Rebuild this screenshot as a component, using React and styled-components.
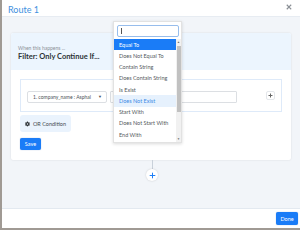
import React from 'react';
import styled, { createGlobalStyle } from 'styled-components';
import { FaCog } from 'react-icons/fa';

const GlobalStyle = createGlobalStyle`
	html, body {
		margin: 0;
		padding: 0;
		font-family: Lato, "Open Sans", sans-serif;
	}
`

const Page = styled.div`
	width: 300px;
	height: 230px;
	box-sizing: border-box;
	padding: 0 0 2px 2px;
	background: #a09a94;
	overflow: hidden;
`

const Modal = styled.div`
	position: relative;
	display: flex;
	flex-direction: column;
	height: 100%;
	background: #ffffff;
`

const Header = styled.div`
	display: flex;
	align-items: center;
	justify-content: space-between;
	height: 17px;
	padding: 0 8px 0 6px;
	border-bottom: 1px solid #e7ecf2;
	box-sizing: border-box;
`

const Title = styled.span`
	font-size: 9px;
	color: #4190e0;
	margin-top: 2px;
`

const Close = styled.span`
	display: flex;
	align-self: flex-start;
	margin-top: 4px;
`

const Body = styled.div`
	flex: 1;
	display: flex;
	flex-direction: column;
	align-items: stretch;
	background: #f2f5f9;
	padding: 16px 9px 0 9px;
`

const Card = styled.div`
	background: #ffffff;
	border-radius: 2px;
	box-shadow: 0 0 2px rgba(0, 0, 0, 0.12);
	overflow: hidden;
`

const CardHead = styled.div`
	display: flex;
	flex-direction: column;
	justify-content: center;
	height: 37px;
	padding: 2px 7px 0;
	box-sizing: border-box;
	background: #ecf5fe;
`

const Subtitle = styled.span`
	font-size: 5px;
	color: #8a8f96;
	line-height: 8px;
`

const HeadTitle = styled.span`
	font-size: 7.5px;
	font-weight: 700;
	color: #2e3338;
	line-height: 10px;
`

const CardBody = styled.div`
	display: flex;
	flex-direction: column;
	align-items: flex-start;
	padding: 9px 9px 10px 9px;
`

const ConditionBox = styled.div`
	display: flex;
	align-items: center;
	align-self: stretch;
	height: 33px;
	box-sizing: border-box;
	padding: 0 6px 0 6px;
	border: 1px solid #deeaf9;
`

const Select = styled.div`
	display: flex;
	align-items: center;
	gap: 3px;
	width: 80px;
	height: 12px;
	box-sizing: border-box;
	padding: 0 4px 0 5px;
	border: 1px solid #dcdfe3;
	border-radius: 2px;
	font-size: 5px;
	color: #4a4f55;
	white-space: nowrap;
	overflow: hidden;
	margin-top: 2px;
`

const Caret = styled.span`
	margin-left: auto;
	font-size: 4px;
`

const ValueInput = styled.div`
	width: 127px;
	height: 12px;
	margin-left: 3px;
	margin-top: 2px;
	box-sizing: border-box;
	border: 1px solid #dcdfe3;
	border-radius: 1px;
`

const AddRule = styled.div`
	display: flex;
	align-items: center;
	justify-content: center;
	width: 9px;
	height: 9px;
	margin-left: auto;
	box-sizing: border-box;
	border: 1px solid #e4e7eb;
	border-radius: 2px;
	background: #fff;
`

const OrButton = styled.div`
	display: flex;
	align-items: center;
	gap: 3px;
	width: 51px;
	height: 17px;
	margin-top: 3px;
	box-sizing: border-box;
	padding: 0 5px;
	border-radius: 3px;
	background: #eaf3fd;
	font-size: 5.5px;
	color: #44494f;
	white-space: nowrap;
`

const PrimaryButton = styled.div`
	display: flex;
	align-items: center;
	justify-content: center;
	width: ${p => p.$w}px;
	height: ${p => p.$h}px;
	margin-top: ${p => p.$top || 0}px;
	border-radius: 2px;
	background: #1a7cf7;
	color: #ffffff;
	font-size: 5.5px;
	box-shadow: 0 0 1px rgba(0, 60, 160, 0.5);
`

const Connector = styled.div`
	display: flex;
	flex-direction: column;
	align-items: center;
	margin-left: 2px;
`

const Line = styled.div`
	width: 1px;
	height: 9px;
	background: #c9d1da;
`

const PlusCircle = styled.div`
	display: flex;
	align-items: center;
	justify-content: center;
	width: 12px;
	height: 12px;
	border-radius: 50%;
	background: #ffffff;
	box-shadow: 0 0 2px rgba(0, 0, 0, 0.18);
`

const Footer = styled.div`
	display: flex;
	align-items: center;
	justify-content: flex-end;
	height: 20px;
	padding-right: 2px;
	border-top: 1px solid #e3e9f0;
	box-sizing: border-box;
`

const Dropdown = styled.div`
	position: absolute;
	left: 111px;
	top: 21px;
	width: 69px;
	height: 122px;
	box-sizing: border-box;
	display: flex;
	flex-direction: column;
	background: #ffffff;
	border: 1px solid #e2e2e2;
	box-shadow: 0 1px 3px rgba(0, 0, 0, 0.15);
`

const SearchBox = styled.div`
	display: flex;
	align-items: center;
	height: 12px;
	margin: 3px 2px 2px 3px;
	box-sizing: border-box;
	padding-left: 3px;
	border: 1px solid #97bdec;
	border-radius: 2px;
`

const Cursor = styled.span`
	width: 0.6px;
	height: 6px;
	background: #555;
`

const ListWrap = styled.div`
	flex: 1;
	display: flex;
	overflow: hidden;
`

const List = styled.div`
	flex: 1;
	display: flex;
	flex-direction: column;
`

const Item = styled.div`
	display: flex;
	align-items: center;
	height: 11.25px;
	flex-shrink: 0;
	padding-left: 5px;
	font-size: 5.5px;
	white-space: nowrap;
	color: ${p => (p.$active ? '#ffffff' : p.$hover ? '#3d8be6' : '#555a60')};
	background: ${p => (p.$active ? '#1a7cf7' : p.$hover ? '#e6f1fd' : 'transparent')};
`

const Scrollbar = styled.div`
	display: flex;
	flex-direction: column;
	align-items: center;
	width: 5px;
	background: #f1f1f1;
`

const Arrow = styled.span`
	font-size: 3px;
	line-height: 6px;
	height: 6px;
	color: #666;
`

const Thumb = styled.div`
	width: 4px;
	height: 66px;
	margin-top: 1px;
	background: #c1c1c1;
`

const options = [
	'Equal To',
	'Does Not Equal To',
	'Contain String',
	'Does Contain String',
	'Is Exist',
	'Does Not Exist',
	'Start With',
	'Does Not Start With',
	'End With',
]

const CloseIcon = () => (
	<svg width="6" height="6" viewBox="0 0 10 10">
		<path d="M2 2 L8 8 M8 2 L2 8" stroke="#8a8f95" strokeWidth="2" strokeLinecap="square" />
	</svg>
)

const PlusIcon = ({ color, size, weight }) => (
	<svg width={size} height={size} viewBox="0 0 10 10">
		<path d="M5 1 V9 M1 5 H9" stroke={color} strokeWidth={weight} />
	</svg>
)

const App = () => (
	<Page>
		<GlobalStyle />
		<Modal>
			<Header>
				<Title>Route 1</Title>
				<Close><CloseIcon /></Close>
			</Header>
			<Body>
				<Card>
					<CardHead>
						<Subtitle>When this happens ...</Subtitle>
						<HeadTitle>Filter: Only Continue If...</HeadTitle>
					</CardHead>
					<CardBody>
						<ConditionBox>
							<Select>
								1. company_name : Asphal
								<Caret>▼</Caret>
							</Select>
							<ValueInput />
							<AddRule><PlusIcon color="#666" size={5} weight={2} /></AddRule>
						</ConditionBox>
						<OrButton>
							<FaCog size={6} color="#2b2f33" />
							OR Condition
						</OrButton>
						<PrimaryButton $w={21} $h={12} $top={6}>Save</PrimaryButton>
					</CardBody>
				</Card>
				<Connector>
					<Line />
					<PlusCircle><PlusIcon color="#1a7cf7" size={7} weight={1.4} /></PlusCircle>
				</Connector>
			</Body>
			<Footer>
				<PrimaryButton $w={22} $h={13}>Done</PrimaryButton>
			</Footer>
			<Dropdown>
				<SearchBox><Cursor /></SearchBox>
				<ListWrap>
					<List>
						{options.map((o, i) => (
							<Item key={o} $active={i === 0} $hover={i === 5}>{o}</Item>
						))}
					</List>
					<Scrollbar>
						<Arrow>▲</Arrow>
						<Thumb />
						<Arrow style={{ marginTop: 'auto' }}>▼</Arrow>
					</Scrollbar>
				</ListWrap>
			</Dropdown>
		</Modal>
	</Page>
)

export default App
